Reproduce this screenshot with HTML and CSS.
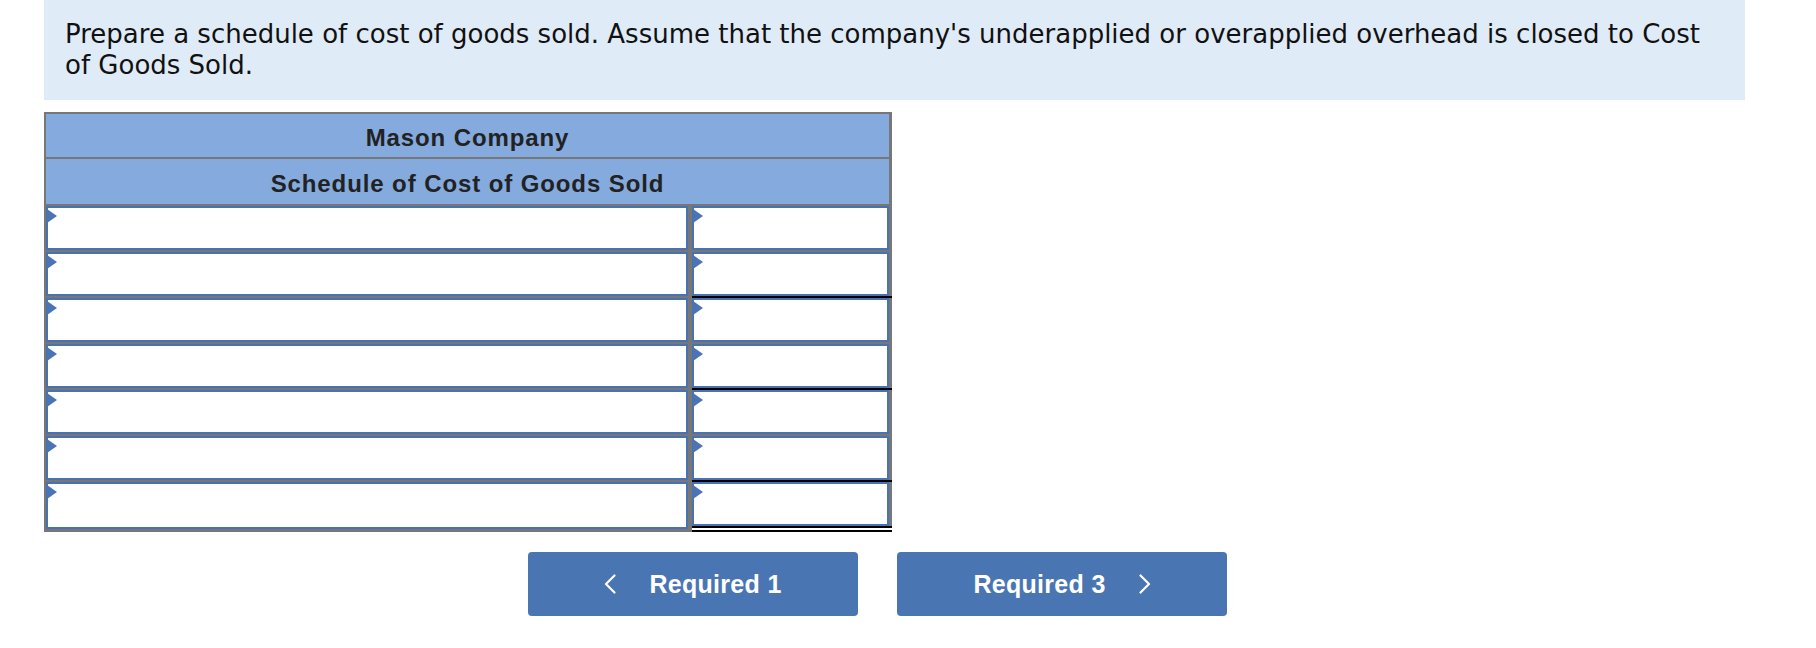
FILE: index.html
```html
<!DOCTYPE html>
<html>
<head>
<meta charset="utf-8">
<link rel="stylesheet" href="styles.css">
</head>
<body>
<div class="page">
  <div class="prompt">Prepare a schedule of cost of goods sold. Assume that the company's underapplied or overapplied overhead is closed to Cost of Goods Sold.</div>

  <div class="sheet">
    <div class="hdr hdr1">Mason Company</div>
    <div class="hdr hdr2">Schedule of Cost of Goods Sold</div>

    <div class="row"><div class="cl"><div class="inp"><span class="tri"></span></div></div><div class="cr"><div class="inp"><span class="tri"></span></div></div></div>
    <div class="row"><div class="cl"><div class="inp"><span class="tri"></span></div></div><div class="cr u"><div class="inp"><span class="tri"></span></div></div></div>
    <div class="row"><div class="cl"><div class="inp"><span class="tri"></span></div></div><div class="cr"><div class="inp"><span class="tri"></span></div></div></div>
    <div class="row"><div class="cl"><div class="inp"><span class="tri"></span></div></div><div class="cr u"><div class="inp"><span class="tri"></span></div></div></div>
    <div class="row"><div class="cl"><div class="inp"><span class="tri"></span></div></div><div class="cr"><div class="inp"><span class="tri"></span></div></div></div>
    <div class="row"><div class="cl"><div class="inp"><span class="tri"></span></div></div><div class="cr u"><div class="inp"><span class="tri"></span></div></div></div>
    <div class="row last"><div class="cl"><div class="inp"><span class="tri"></span></div></div><div class="cr dbl"><div class="inp"><span class="tri"></span></div></div></div>
  </div>

  <div class="nav">
    <button class="btn">
      <svg class="chev" width="12" height="20" viewBox="0 0 12 20"><polyline points="10.5,1.5 2,10 10.5,18.5" fill="none" stroke="#fff" stroke-width="2.2" stroke-linecap="round" stroke-linejoin="round"/></svg>
      <span>Required 1</span>
    </button>
    <button class="btn">
      <span>Required 3</span>
      <svg class="chev" width="12" height="20" viewBox="0 0 12 20"><polyline points="1.5,1.5 10,10 1.5,18.5" fill="none" stroke="#fff" stroke-width="2.2" stroke-linecap="round" stroke-linejoin="round"/></svg>
    </button>
  </div>
</div>
</body>
</html>
```

FILE: styles.css
```css
html, body {
  margin: 0;
  padding: 0;
  background: #ffffff;
}

.page {
  padding-left: 44px;
}

.prompt {
  width: 1701px;
  box-sizing: border-box;
  height: 100px;
  background: #dfebf7;
  padding: 19px 30px 0 21px;
  font-family: "DejaVu Sans", Verdana, sans-serif;
  font-size: 26px;
  line-height: 31px;
  color: #111111;
}

.sheet {
  margin-top: 12px;
  width: 848px;
  box-sizing: border-box;
  border-top: 2px solid #777777;
  border-left: 2px solid #777777;
  background: #777777;
}

.hdr {
  background: #84aade;
  display: flex;
  align-items: center;
  justify-content: center;
  font-family: "Liberation Sans", Arial, sans-serif;
  font-weight: bold;
  font-size: 24px;
  letter-spacing: 0.9px;
  color: #222222;
  border-bottom: 2px solid #777777;
  margin-right: 3px;
  padding-top: 4px;
}

.hdr1 {
  height: 39px;
}

.hdr2 {
  height: 41px;
}

.row {
  display: flex;
}

.cl {
  width: 642px;
  border-bottom: 2px solid #777777;
  background: #ffffff;
}

.cr {
  width: 200px;
  margin-left: 4px;
  box-sizing: border-box;
  border-bottom: 2px solid #777777;
  background: #ffffff;
  box-shadow: inset -3px 0 0 #777777;
}

.cr .inp {
  margin-right: 3px;
}

.cr.u {
  border-bottom-color: #000000;
}

.cr.dbl {
  border-bottom: 6px double #000000;
}

.inp {
  position: relative;
  height: 44px;
  box-sizing: border-box;
  border: 2px solid #4872b4;
  background: #ffffff;
}

.row.last .cl {
  border-bottom-width: 3px;
}

.row.last .cl .inp {
  height: 47px;
}

.row.last .cr .inp {
  height: 44px;
}

.tri {
  position: absolute;
  left: -1px;
  top: 1px;
  width: 0;
  height: 0;
  border-left: 10px solid #4a74b6;
  border-top: 7px solid transparent;
  border-bottom: 7px solid transparent;
}

.nav {
  display: flex;
  gap: 39px;
  margin-top: 20px;
  margin-left: 484px;
}

.btn {
  width: 330px;
  height: 64px;
  border: none;
  border-radius: 4px;
  background: #4a75b3;
  color: #ffffff;
  font-family: "Liberation Sans", Arial, sans-serif;
  font-weight: bold;
  font-size: 25px;
  letter-spacing: 0.3px;
  display: flex;
  align-items: center;
  justify-content: center;
  gap: 33px;
  padding: 0;
}

.chev {
  display: block;
}
```
